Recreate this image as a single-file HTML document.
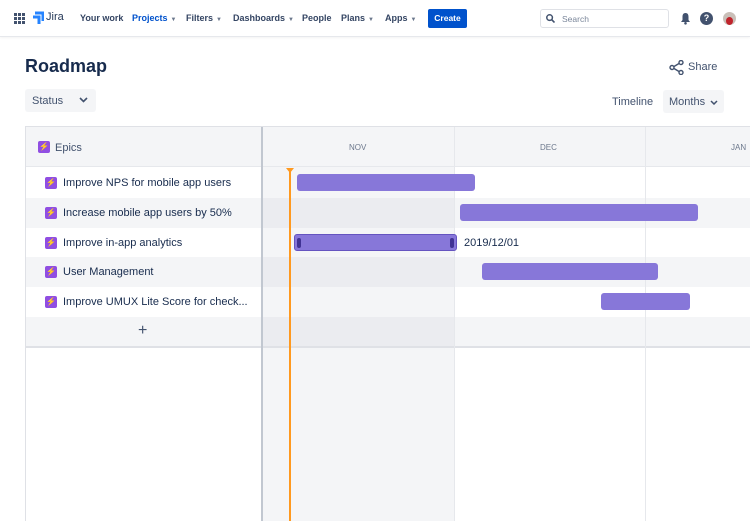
<!DOCTYPE html><html><head><style>
*{box-sizing:border-box;margin:0;padding:0}
body{width:750px;height:521px;overflow:hidden;background:#fff;font-family:"Liberation Sans",sans-serif;color:#172b4d;position:relative}
.a{position:absolute}
.nav{top:0;left:0;width:750px;height:37px;border-bottom:1px solid #e6e8ec;box-shadow:0 1px 2px rgba(0,0,0,.05)}
.ni{top:13px;font-size:9px;font-weight:bold;color:#344563}
.chev{font-size:6px;color:#6b778c;margin-left:3px}
.ep{width:12px;height:12px;background:#904ee2;border-radius:2px;color:#fff;font-size:8px;text-align:center;line-height:12px}
.rt{font-size:11px;color:#172b4d}
.bar{background:#8777d9;border-radius:3px;height:17px}
</style></head><body>
<div class="a nav"></div>
<svg class="a" style="left:14px;top:13px" width="11" height="11"><g fill="#42526e"><rect x="0" y="0" width="3" height="3"/><rect x="4" y="0" width="3" height="3"/><rect x="8" y="0" width="3" height="3"/><rect x="0" y="4" width="3" height="3"/><rect x="4" y="4" width="3" height="3"/><rect x="8" y="4" width="3" height="3"/><rect x="0" y="8" width="3" height="3"/><rect x="4" y="8" width="3" height="3"/><rect x="8" y="8" width="3" height="3"/></g></svg>
<svg class="a" style="left:32px;top:11px" width="12" height="14"><path d="M3 2h8v8M1 6h6v7" stroke="#2684ff" stroke-width="3" fill="none"/></svg>
<div class="a" style="left:46px;top:11px;font-size:11px;color:#253858">Jira</div>
<div class="a ni" style="left:80px">Your work</div>
<div class="a ni" style="left:132px;color:#0052cc">Projects<span class="chev">▼</span></div>
<div class="a ni" style="left:186px">Filters<span class="chev">▼</span></div>
<div class="a ni" style="left:233px">Dashboards<span class="chev">▼</span></div>
<div class="a ni" style="left:302px">People</div>
<div class="a ni" style="left:341px">Plans<span class="chev">▼</span></div>
<div class="a ni" style="left:385px">Apps<span class="chev">▼</span></div>
<div class="a" style="left:428px;top:9px;width:39px;height:19px;background:#0052cc;border-radius:2px;color:#fff;font-size:8.5px;font-weight:bold;text-align:center;line-height:19px">Create</div>
<div class="a" style="left:540px;top:9px;width:129px;height:19px;border:1.5px solid #dfe1e6;border-radius:3px;font-size:8.5px;color:#7a869a;padding:4px 0 0 21px">Search</div>
<svg class="a" style="left:546px;top:14px" width="9" height="9"><circle cx="3.6" cy="3.6" r="2.8" stroke="#42526e" stroke-width="1.5" fill="none"/><path d="M5.6 5.6L8.5 8.5" stroke="#42526e" stroke-width="1.6"/></svg>
<svg class="a" style="left:680px;top:12px" width="11" height="13"><path d="M5.5 1C3 1 2.5 3 2.5 5v3L1 10h9L8.5 8V5C8.5 3 8 1 5.5 1z" fill="#42526e"/><circle cx="5.5" cy="11.3" r="1.3" fill="#42526e"/></svg>
<div class="a" style="left:700px;top:12px;width:13px;height:13px;border-radius:50%;background:#42526e;color:#fff;font-size:9px;font-weight:bold;text-align:center;line-height:13px">?</div>
<div class="a" style="left:723px;top:12px;width:13px;height:13px;border-radius:50%;background:#c9bfb8;overflow:hidden"><div style="margin:5px 0 0 3px;width:7px;height:8px;border-radius:50%;background:#c0242c"></div></div>
<div class="a" style="left:25px;top:56px;font-size:18px;font-weight:bold;color:#172b4d">Roadmap</div>
<svg class="a" style="left:669px;top:60px" width="16" height="15"><g stroke="#42526e" stroke-width="1.4" fill="none"><circle cx="3" cy="7.5" r="2"/><circle cx="12" cy="2.5" r="2"/><circle cx="12" cy="12.5" r="2"/><path d="M5 6.5l5-3M5 8.5l5 3"/></g></svg>
<div class="a" style="left:688px;top:61px;font-size:11px;color:#42526e">Share</div>
<div class="a" style="left:25px;top:89px;width:71px;height:23px;background:#f4f5f7;border-radius:3px;font-size:11px;color:#42526e;padding:6px 0 0 7px">Status</div>
<svg class="a" style="left:79px;top:97px" width="9" height="6"><path d="M1 1l3.5 3.5L8 1" stroke="#42526e" stroke-width="1.6" fill="none"/></svg>
<div class="a" style="left:612px;top:96px;font-size:11px;color:#42526e">Timeline</div>
<div class="a" style="left:663px;top:90px;width:61px;height:23px;background:#f4f5f7;border-radius:3px;font-size:11px;color:#42526e;padding:6px 0 0 6px">Months</div>
<svg class="a" style="left:710px;top:100px" width="8" height="5"><path d="M1 1l3 3 3-3" stroke="#42526e" stroke-width="1.5" fill="none"/></svg>

<div class="a" style="left:25px;top:126px;width:725px;height:395px;border-left:1px solid #dfe1e6;border-top:1px solid #dfe1e6"></div>
<div class="a" style="left:26px;top:127px;width:724px;height:40px;background:#f4f5f7;border-bottom:1px solid #e6e8ec"></div>
<div class="a" style="left:263px;top:167px;width:191px;height:354px;background:#f4f5f7"></div>
<div class="a" style="left:26px;top:198px;width:724px;height:30px;background:#f4f5f7"></div>
<div class="a" style="left:26px;top:257px;width:724px;height:30px;background:#f4f5f7"></div>
<div class="a" style="left:26px;top:317px;width:724px;height:30px;background:#f4f5f7"></div>
<div class="a" style="left:263px;top:198px;width:191px;height:30px;background:#ebecf0"></div>
<div class="a" style="left:263px;top:257px;width:191px;height:30px;background:#ebecf0"></div>
<div class="a" style="left:263px;top:317px;width:191px;height:30px;background:#ebecf0"></div>
<div class="a" style="left:26px;top:346px;width:724px;height:2px;background:#dfe1e6"></div>
<div class="a" style="left:454px;top:127px;width:1px;height:394px;background:#e6e8ec"></div>
<div class="a" style="left:645px;top:127px;width:1px;height:394px;background:#e6e8ec"></div>
<div class="a" style="left:261px;top:127px;width:2px;height:394px;background:#c1c7d0"></div>
<div class="a" style="left:349px;top:143px;font-size:8px;color:#6b778c">NOV</div>
<div class="a" style="left:540px;top:143px;font-size:8px;color:#6b778c">DEC</div>
<div class="a" style="left:731px;top:143px;font-size:8px;color:#6b778c">JAN</div>
<div class="a ep" style="left:38px;top:141px">⚡</div>
<div class="a" style="left:55px;top:142px;font-size:11px;color:#42526e">Epics</div>

<div class="a ep" style="left:45px;top:177px">⚡</div><div class="a rt" style="left:63px;top:177px">Improve NPS for mobile app users</div>
<div class="a ep" style="left:45px;top:207px">⚡</div><div class="a rt" style="left:63px;top:207px">Increase mobile app users by 50%</div>
<div class="a ep" style="left:45px;top:237px">⚡</div><div class="a rt" style="left:63px;top:237px">Improve in-app analytics</div>
<div class="a ep" style="left:45px;top:266px">⚡</div><div class="a rt" style="left:63px;top:266px">User Management</div>
<div class="a ep" style="left:45px;top:296px">⚡</div><div class="a rt" style="left:63px;top:296px">Improve UMUX Lite Score for check...</div>
<div class="a" style="left:138px;top:322px;font-size:16px;color:#42526e">+</div>

<div class="a bar" style="left:297px;top:174px;width:178px"></div>
<div class="a bar" style="left:460px;top:204px;width:238px"></div>
<div class="a bar" style="left:294px;top:234px;width:163px;border:1px solid #6554c0"><div class="a" style="left:2px;top:3px;width:4px;height:10px;border-radius:2px;background:#403294"></div><div class="a" style="right:2px;top:3px;width:4px;height:10px;border-radius:2px;background:#403294"></div></div>
<div class="a rt" style="left:464px;top:237px">2019/12/01</div>
<div class="a bar" style="left:482px;top:263px;width:176px"></div>
<div class="a bar" style="left:601px;top:293px;width:89px"></div>
<div class="a" style="left:289px;top:170px;width:2px;height:351px;background:#ff991f"></div>
<svg class="a" style="left:286px;top:168px" width="8" height="6"><path d="M0 0h8L4 5z" fill="#ff991f"/></svg>
</body></html>
